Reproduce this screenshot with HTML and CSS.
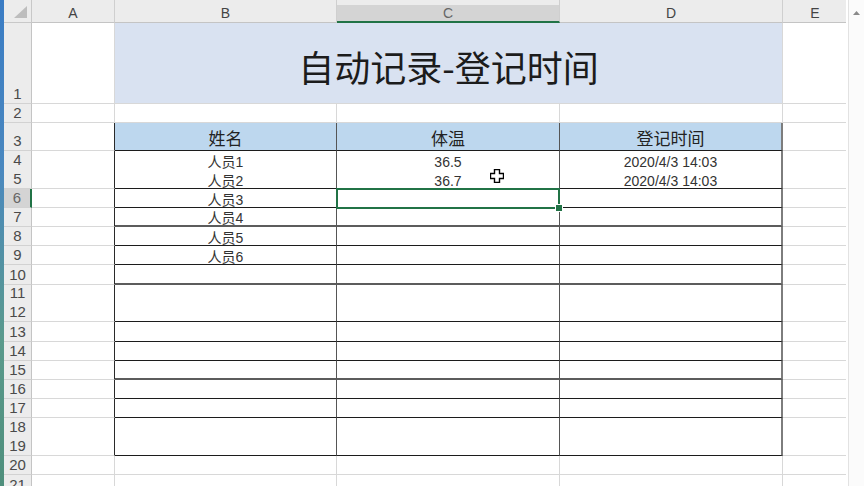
FILE: index.html
```html
<!DOCTYPE html>
<html lang="zh-CN">
<head>
<meta charset="utf-8">
<title>自动记录-登记时间</title>
<link rel="stylesheet" href="styles.css">
</head>
<body>
<div class="screen">
  <div class="edge"></div>
  <div class="sheet">
    <!-- column headers -->
    <div class="corner"><svg width="14" height="13" viewBox="0 0 14 13"><polygon points="13,0 13,12 0,12" fill="#bdbdbd"/></svg></div>
    <div class="ch">A</div>
    <div class="ch">B</div>
    <div class="ch on">C</div>
    <div class="ch">D</div>
    <div class="ch">E</div>

    <!-- row 1 -->
    <div class="rh"><span>1</span></div>
    <div class="c"></div>
    <div class="title">自动记录-登记时间</div>
    <div class="c"></div>

    <!-- row 2 -->
    <div class="rh"><span>2</span></div>
    <div class="c"></div>
    <div class="c"></div>
    <div class="c"></div>
    <div class="c"></div>
    <div class="c"></div>

    <!-- row 3 -->
    <div class="rh"><span>3</span></div>
    <div class="c edgeR"></div>
    <div class="t h">姓名</div>
    <div class="t h">体温</div>
    <div class="t h last">登记时间</div>
    <div class="c"></div>

    <!-- rows 4-5 -->
    <div class="rh"><span>4</span><span>5</span></div>
    <div class="c edgeR"></div>
    <div class="t two"><span>人员1</span><span>人员2</span></div>
    <div class="t two"><span>36.5</span><span>36.7</span></div>
    <div class="t two last"><span>2020/4/3 14:03</span><span>2020/4/3 14:03</span></div>
    <div class="c"></div>

    <!-- row 6 -->
    <div class="rh on"><span>6</span></div>
    <div class="c edgeR"></div>
    <div class="t">人员3</div>
    <div class="t sel"></div>
    <div class="t last"></div>
    <div class="c"></div>

    <!-- row 7 -->
    <div class="rh"><span>7</span></div>
    <div class="c edgeR"></div>
    <div class="t g">人员4</div>
    <div class="t g"></div>
    <div class="t g last"></div>
    <div class="c"></div>

    <!-- row 8 -->
    <div class="rh"><span>8</span></div>
    <div class="c edgeR"></div>
    <div class="t">人员5</div>
    <div class="t"></div>
    <div class="t last"></div>
    <div class="c"></div>

    <!-- row 9 -->
    <div class="rh"><span>9</span></div>
    <div class="c edgeR"></div>
    <div class="t">人员6</div>
    <div class="t"></div>
    <div class="t last"></div>
    <div class="c"></div>

    <!-- row 10 -->
    <div class="rh"><span>10</span></div>
    <div class="c edgeR"></div>
    <div class="t g"></div>
    <div class="t g"></div>
    <div class="t g last"></div>
    <div class="c"></div>

    <!-- rows 11-12 -->
    <div class="rh"><span>11</span><span>12</span></div>
    <div class="c edgeR"></div>
    <div class="t"></div>
    <div class="t"></div>
    <div class="t last"></div>
    <div class="c"></div>

    <!-- row 13 -->
    <div class="rh"><span>13</span></div>
    <div class="c edgeR"></div>
    <div class="t"></div>
    <div class="t"></div>
    <div class="t last"></div>
    <div class="c"></div>

    <!-- row 14 -->
    <div class="rh"><span>14</span></div>
    <div class="c edgeR"></div>
    <div class="t"></div>
    <div class="t"></div>
    <div class="t last"></div>
    <div class="c"></div>

    <!-- row 15 -->
    <div class="rh"><span>15</span></div>
    <div class="c edgeR"></div>
    <div class="t g"></div>
    <div class="t g"></div>
    <div class="t g last"></div>
    <div class="c"></div>

    <!-- row 16 -->
    <div class="rh"><span>16</span></div>
    <div class="c edgeR"></div>
    <div class="t"></div>
    <div class="t"></div>
    <div class="t last"></div>
    <div class="c"></div>

    <!-- row 17 -->
    <div class="rh"><span>17</span></div>
    <div class="c edgeR"></div>
    <div class="t"></div>
    <div class="t"></div>
    <div class="t last"></div>
    <div class="c"></div>

    <!-- rows 18-19 -->
    <div class="rh"><span>18</span><span>19</span></div>
    <div class="c edgeR"></div>
    <div class="t"></div>
    <div class="t"></div>
    <div class="t last"></div>
    <div class="c"></div>

    <!-- row 20 -->
    <div class="rh"><span>20</span></div>
    <div class="c"></div>
    <div class="c"></div>
    <div class="c"></div>
    <div class="c"></div>
    <div class="c"></div>

    <!-- row 21 -->
    <div class="rh top"><span>21</span></div>
    <div class="c"></div>
    <div class="c"></div>
    <div class="c"></div>
    <div class="c"></div>
    <div class="c"></div>

    <svg class="cursor" width="14" height="14" viewBox="0 0 14 14">
      <path d="M4.5 0.5h5v4h4v5h-4v4h-5v-4h-4v-5h4z" fill="#fff" stroke="#000" stroke-width="1.4"/>
    </svg>
  </div>
  <div class="vscroll">
    <div class="up"><svg width="7" height="4" viewBox="0 0 7 4"><polygon points="3.5,0 7,4 0,4" fill="#8a8a8a"/></svg></div>
  </div>
</div>
</body>
</html>
```

FILE: styles.css
```css
* { box-sizing: border-box; }
html, body { margin: 0; padding: 0; }
body {
  background: #ffffff;
  font-family: "Liberation Sans", "Noto Sans CJK SC", sans-serif;
  overflow: hidden;
}
.screen {
  display: flex;
  width: 864px;
  height: 486px;
}
.edge {
  width: 4px;
  background: linear-gradient(#3a7cc4 0%, #4a88bf 35%, #5a9a8c 70%, #4f8f7c 100%);
}
.sheet {
  position: relative;
  width: 844px;
  display: grid;
  grid-template-columns: 28px 83px 222px 223px 223px 65px;
  grid-template-rows: 23px 81px 19px 28px 38px 19px 19px 19px 19px 20px 37px 20px 19px 19px 19px 19px 38px 19px 1fr;
  overflow: hidden;
}
.corner {
  background: #ececec;
  border-right: 1px solid #c8c8c8;
  border-bottom: 1px solid #c8c8c8;
  display: flex;
  align-items: flex-end;
  justify-content: flex-end;
  padding: 0 3px 3px 0;
}
.ch {
  background: #ececec;
  border-right: 1px solid #cfcfcf;
  border-bottom: 1px solid #c4c4c4;
  text-align: center;
  font-size: 14px;
  line-height: 27px;
  color: #444;
}
.ch.on {
  background: linear-gradient(#ececec 0 5px, #d4d4d4 5px);
  border-bottom: 2px solid #217346;
  color: #666;
}
.rh {
  background: #ececec;
  border-right: 1px solid #c4c4c4;
  border-bottom: 1px solid #d2d2d2;
  display: flex;
  flex-direction: column;
  justify-content: flex-end;
  align-items: center;
  font-size: 15px;
  color: #4a4a4a;
}
.rh span {
  line-height: 20px;
  height: 19px;
}
.rh.on {
  background: #d4d4d4;
  border-right: 2px solid #217346;
  color: #666;
}
.rh.top { justify-content: flex-start; }
.c {
  border-right: 1px solid #d8d8d8;
  border-bottom: 1px solid #d8d8d8;
}
.c.edgeR { border-right-color: #2a2a2a; }
.title {
  grid-column: span 3;
  background: #d9e2f1;
  border-right: 1px solid #d8d8d8;
  border-bottom: 1px solid #d8d8d8;
  display: flex;
  align-items: center;
  justify-content: center;
  padding-top: 6px;
  font-family: "Noto Sans CJK SC", sans-serif;
  font-size: 36px;
  color: #1c1c1c;
}
.t {
  border-right: 1px solid #555;
  border-bottom: 1px solid #1c1c1c;
  display: flex;
  align-items: center;
  justify-content: center;
  font-size: 14px;
  color: #333;
  padding-top: 1px;
}
.t.last { border-right: 2px solid #7d7d7d; }
.t.g { border-bottom: 2px solid #5c5c5c; }
.t.h {
  background: #bdd7ee;
  font-family: "Noto Sans CJK SC", sans-serif;
  font-size: 17px;
  color: #222;
  padding-top: 2px;
}
.t.two {
  flex-direction: column;
  justify-content: flex-start;
}
.t.two span {
  height: 19px;
  line-height: 20px;
}
.sel { position: relative; }
.sel::after {
  content: "";
  position: absolute;
  left: -1px;
  top: -1px;
  right: -1px;
  bottom: -2px;
  border: 2px solid #217346;
}
.sel::before {
  content: "";
  position: absolute;
  right: -4px;
  bottom: -5px;
  width: 6px;
  height: 6px;
  background: #217346;
  border: 1px solid #fff;
  z-index: 2;
}
.cursor {
  position: absolute;
  left: 486px;
  top: 169px;
}
.vscroll {
  width: 16px;
  margin-left: 2px;
  border-left: 1px solid #e2e2e2;
  background: #fbfbfb;
  display: flex;
  flex-direction: column;
  align-items: center;
  padding-top: 6px;
}
.up {
  width: 13px;
  height: 14px;
  display: flex;
  align-items: center;
  justify-content: center;
}
```
